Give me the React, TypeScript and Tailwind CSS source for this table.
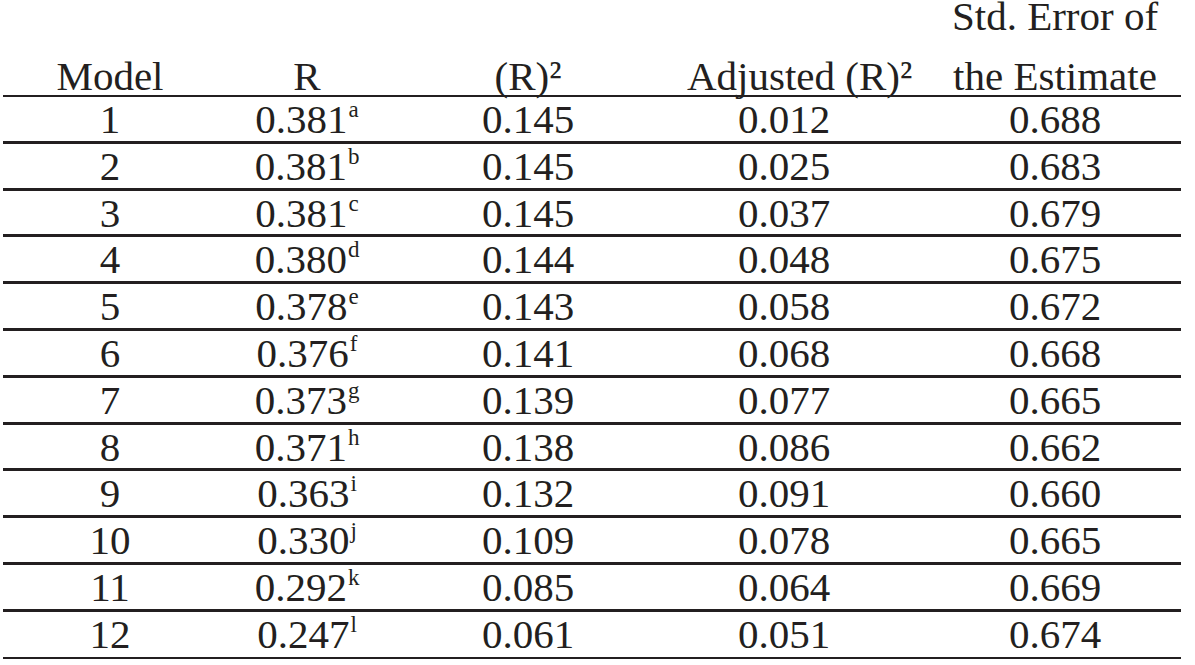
const rows = [
  { model: '1', r: '0.381', sup: 'a', r2: '0.145', adj: '0.012', se: '0.688' },
  { model: '2', r: '0.381', sup: 'b', r2: '0.145', adj: '0.025', se: '0.683' },
  { model: '3', r: '0.381', sup: 'c', r2: '0.145', adj: '0.037', se: '0.679' },
  { model: '4', r: '0.380', sup: 'd', r2: '0.144', adj: '0.048', se: '0.675' },
  { model: '5', r: '0.378', sup: 'e', r2: '0.143', adj: '0.058', se: '0.672' },
  { model: '6', r: '0.376', sup: 'f', r2: '0.141', adj: '0.068', se: '0.668' },
  { model: '7', r: '0.373', sup: 'g', r2: '0.139', adj: '0.077', se: '0.665' },
  { model: '8', r: '0.371', sup: 'h', r2: '0.138', adj: '0.086', se: '0.662' },
  { model: '9', r: '0.363', sup: 'i', r2: '0.132', adj: '0.091', se: '0.660' },
  { model: '10', r: '0.330', sup: 'j', r2: '0.109', adj: '0.078', se: '0.665' },
  { model: '11', r: '0.292', sup: 'k', r2: '0.085', adj: '0.064', se: '0.669' },
  { model: '12', r: '0.247', sup: 'l', r2: '0.061', adj: '0.051', se: '0.674' },
]

const cols = 'grid grid-cols-[214px_180px_262px_250px_272px]'

export default function App() {
  return (
    <div className="h-[665px] w-[1195px] overflow-hidden bg-white text-[#231f20] font-['Liberation_Serif',serif] text-[41px]">
      <div className="ml-[3px] w-[1178px]">
        {/* header */}
        <div
          className={`${cols} h-[97px] grid-rows-[95px] items-end border-b-2 border-[#231f20] leading-[38px] whitespace-nowrap`}
        >
          <div className="text-center">Model</div>
          <div className="text-center">R</div>
          <div className="text-center">(R)²</div>
          <div className="pl-[28px] text-center">Adjusted (R)²</div>
          <div className="flex h-[95px] flex-col pl-[20px] text-center">
            <div className="pt-[4px] leading-[24px]">Std. Error of</div>
            <div className="mt-[29px]">the Estimate</div>
          </div>
        </div>

        {rows.map((row, i) => (
          <div
            key={row.model}
            className={`${cols} h-[46.8px] leading-[44px] ${
              i === rows.length - 1 ? 'border-b-2' : 'border-b-3'
            } border-[#231f20]`}
          >
            <div className="text-center">{row.model}</div>
            <div className="text-center">
              {row.r}
              <span className="relative -top-[16px] ml-[1px] text-[23px] leading-none">
                {row.sup}
              </span>
            </div>
            <div className="text-center">{row.r2}</div>
            <div className="text-center">{row.adj}</div>
            <div className="pl-[20px] text-center">{row.se}</div>
          </div>
        ))}
      </div>
    </div>
  )
}
